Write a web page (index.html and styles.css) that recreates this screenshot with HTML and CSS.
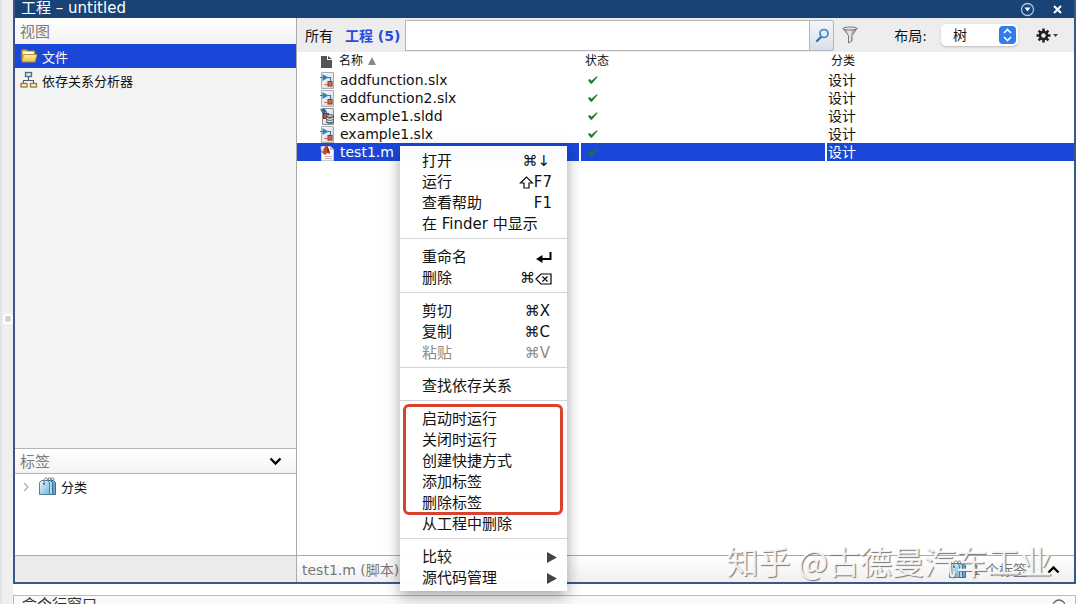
FILE: index.html
```html
<!DOCTYPE html>
<html lang="zh-CN">
<head>
<meta charset="utf-8">
<title>工程 – untitled</title>
<link rel="stylesheet" href="styles.css">
</head>
<body>
<svg class="defs" aria-hidden="true">
  <defs>
    <linearGradient id="paper" x1="0" y1="0" x2="1" y2="1"><stop offset="0" stop-color="#fff"/><stop offset="1" stop-color="#ccd3da"/></linearGradient>
    <linearGradient id="tagfill" x1="0" y1="0" x2="1" y2="1"><stop offset="0" stop-color="#e9f7fd"/><stop offset="1" stop-color="#78b4d9"/></linearGradient>
    <linearGradient id="gold" x1="0" y1="0" x2="0" y2="1"><stop offset="0" stop-color="#fff3a6"/><stop offset="1" stop-color="#e8bd45"/></linearGradient>
    <linearGradient id="steel" x1="0" y1="0" x2="1" y2="0"><stop offset="0" stop-color="#888"/><stop offset=".45" stop-color="#eee"/><stop offset="1" stop-color="#777"/></linearGradient>
    <symbol id="slx" viewBox="0 0 15 17">
      <path d="M1.500.5h12v16h-12z" fill="url(#paper)" stroke="#a9aeb3"/>
      <path d="M2.500 2l6 3.500-6 3.500z" fill="#2f7fb8"/><path d="M0 5.500h3M8 5.500h2.500v4" fill="none" stroke="#2f7fb8" stroke-width="1.200"/>
      <rect x="8" y="9.500" width="4" height="4.500" fill="#d8684c" stroke="#943624"/>
      <path d="M4.500 12.500h3.500" stroke="#c06a58"/>
    </symbol>
    <symbol id="sldd" viewBox="0 0 15 17">
      <path d="M2.500.5h11v16h-11z" fill="url(#paper)" stroke="#8a9096"/>
      <path d="M0 1l4.500-.5L7 3.500 3 6z" fill="#286d9e"/><path d="M5 3l2 2" stroke="#286d9e"/>
      <rect x="3.500" y="5.500" width="5" height="5" fill="#c9563f" stroke="#7d2c20"/>
      <path d="M6.500 8v6c0 1.600 7 1.600 7 0V8z" fill="#707880" stroke="#41484f"/>
      <ellipse cx="10" cy="8" rx="3.500" ry="1.300" fill="#dfe4e8" stroke="#41484f"/>
      <path d="M6.500 10.500q3.500 1.800 7 0M6.500 12.800q3.500 1.800 7 0" fill="none" stroke="#f3f3f3"/>
    </symbol>
    <symbol id="mfile" viewBox="0 0 15 17">
      <path d="M1.500 2.500h9l3 3v11h-12z" fill="#f8f8f8" stroke="#c8cdd2"/>
      <path d="M1 7.500l2-2 3.500-5L9 5l1 5-3-1-2 2z" fill="#c7442f"/><path d="M0 3l4 3-2 2z" fill="#b9d3ec"/><path d="M6.500.5L10 9l-2.500-1z" fill="#732b26"/>
      <path d="M5 12.500h7M5 14.500h7" stroke="#d8b4aa"/><path d="M10.500 2.500v3h3" fill="#ddd" stroke="#b7bdc3"/>
    </symbol>
    <symbol id="tags" viewBox="0 0 18 19">
      <path d="M8.500 3.500h6l2 2v12h-8z" fill="#6aa6cc" stroke="#3c6f94"/>
      <path d="M6.500 3.500h5l2 2v12h-8z" fill="#a9d7ed" stroke="#3c6f94"/>
      <path d="M.5 5.500l2-2h6l2 2v12H.5z" fill="url(#tagfill)" stroke="#4d82a8"/>
      <path d="M5 7c-1-8 4-7 4-3M9 3c0-3 3-3 3 0M12 3c0-3 3-3 3 0" fill="none" stroke="#6c7072"/>
      <circle cx="5" cy="7" r="1" fill="#356a8b"/>
    </symbol>
    <symbol id="check" viewBox="0 0 12 12"><path d="M1 6l1.700-1 1.800 1.800L9.500 2.500l1.300.2L4.800 9.800H3.600z" fill="#24762a"/></symbol>
  </defs>
</svg>

<main class="window">
  <header class="titlebar">
    <h1 class="title">工程 – untitled</h1>
    <button class="title-btn" aria-label="窗口操作"><svg width="15" height="15" viewBox="0 0 15 15"><circle cx="7.500" cy="7.500" r="6" fill="none" stroke="#a9c5e4" stroke-width="1.300"/><path d="M4.500 5.500h6L7.500 9.500z" fill="#fff"/></svg></button>
    <button class="title-btn" aria-label="关闭"><svg width="11" height="11" viewBox="0 0 11 11"><path d="M2 2l7 7M9 2L2 9" stroke="#fff" stroke-width="2"/></svg></button>
  </header>
  <div class="panes">
    <aside class="sidebar">
      <h2 class="section-head">视图</h2>
      <nav class="views">
        <button class="view view-on"><svg width="18" height="16" viewBox="0 0 18 16"><path d="M1.500 13V2.500l1-1h4l1.500 1.500h7v9" fill="#d4a536" stroke="#8f7434"/><path d="M3 3.500h11v5H3z" fill="#fffbe0"/><path d="M3.500 6.500h13.500l-2 7.500h-13z" fill="url(#gold)" stroke="#b4903c"/></svg>文件</button>
        <button class="view"><svg width="18" height="18" viewBox="0 0 18 18"><path d="M8.500 6v3.500M3.500 12V9.500h10V12" fill="none" stroke="#555b66" stroke-width="1.200"/><rect x="5.500" y="1.500" width="6" height="4" fill="#d8e8f5" stroke="#50657f" stroke-width="1.300"/><rect x="1" y="12.500" width="6" height="3.500" fill="#fff2c9" stroke="#9a7736" stroke-width="1.300"/><rect x="10.500" y="12.500" width="6" height="3.500" fill="#fff2c9" stroke="#9a7736" stroke-width="1.300"/></svg>依存关系分析器</button>
      </nav>
      <div class="section-head section-tags"><h2 class="section-name">标签</h2><button class="plain" aria-label="折叠"><svg width="13" height="9" viewBox="0 0 13 9"><path d="M1.500 1.500l5 5 5-5" fill="none" stroke="#000" stroke-width="2.300"/></svg></button></div>
      <div class="tag-tree"><button class="tag-item"><svg width="6" height="10" viewBox="0 0 6 10"><path d="M1 1l4 4-4 4" fill="none" stroke="#aaa" stroke-width="1.200"/></svg><svg width="18" height="19"><use href="#tags"/></svg>分类</button></div>
      <div class="side-foot"></div>
    </aside>
    <section class="content">
      <div class="toolbar">
        <button class="plain scope">所有</button>
        <button class="plain scope scope-on">工程 (5)</button>
        <div class="search">
          <input class="search-box" type="text" aria-label="搜索">
          <button class="search-btn" aria-label="搜索"><svg width="15" height="15" viewBox="0 0 15 15"><path d="M2 13l4-4" stroke="#3d70a8" stroke-width="2.400" stroke-linecap="round"/><circle cx="9" cy="5.500" r="4" fill="#dceefd" stroke="#4783bd" stroke-width="1.700"/></svg></button>
        </div>
        <button class="plain filter" aria-label="筛选"><svg width="16" height="18" viewBox="0 0 16 18"><path d="M1 2.500l5.500 7V17l3.500-2V9.500l5-7z" fill="url(#steel)" stroke="#777"/><ellipse cx="8" cy="2.500" rx="7" ry="1.500" fill="#e5e5e5" stroke="#777"/></svg></button>
        <label class="layout-label" for="layout">布局:</label>
        <div class="select-wrap">
          <select class="layout-select" id="layout"><option>树</option></select>
          <svg class="select-knob" width="17" height="18" viewBox="0 0 17 18"><rect width="17" height="18" rx="4" fill="#2f7cf6"/><path d="M5 7l3.500-3.500L12 7M5 11l3.500 3.500L12 11" fill="none" stroke="#fff" stroke-width="1.600"/></svg>
        </div>
        <button class="plain" aria-label="设置"><svg width="23" height="15" viewBox="0 0 23 15"><g stroke="#222" stroke-width="2.600"><path d="M7.500.5v14M.5 7.500h14M2.600 2.600l9.800 9.800M12.400 2.600l-9.800 9.800"/></g><circle cx="7.500" cy="7.500" r="4.800" fill="#222"/><circle cx="7.500" cy="7.500" r="2.200" fill="#eee"/><path d="M17 6h5l-2.500 3z" fill="#444"/></svg></button>
      </div>
      <table class="files">
        <thead><tr>
          <th class="col-name"><span class="cell"><svg width="15" height="13" viewBox="0 0 15 13"><path d="M2 1h6v4h5v8H2z" fill="#555"/><path d="M9 1l4 3H9z" fill="#555"/></svg>名称 <svg class="sort" width="8" height="8" viewBox="0 0 8 8"><path d="M4 0l4 8H0z" fill="#888"/></svg></span></th>
          <th class="col-state">状态</th><th class="col-cat">分类</th>
        </tr></thead>
        <tbody>
          <tr><td><span class="cell"><svg width="15" height="17"><use href="#slx"/></svg>addfunction.slx</span></td><td class="state"><svg width="12" height="12"><use href="#check"/></svg></td><td>设计</td></tr>
          <tr><td><span class="cell"><svg width="15" height="17"><use href="#slx"/></svg>addfunction2.slx</span></td><td class="state"><svg width="12" height="12"><use href="#check"/></svg></td><td>设计</td></tr>
          <tr><td><span class="cell"><svg width="15" height="17"><use href="#sldd"/></svg>example1.sldd</span></td><td class="state"><svg width="12" height="12"><use href="#check"/></svg></td><td>设计</td></tr>
          <tr><td><span class="cell"><svg width="15" height="17"><use href="#slx"/></svg>example1.slx</span></td><td class="state"><svg width="12" height="12"><use href="#check"/></svg></td><td>设计</td></tr>
          <tr class="row-on"><td><span class="cell"><svg width="15" height="17"><use href="#mfile"/></svg>test1.m</span></td><td class="state"><svg width="12" height="12"><use href="#check"/></svg></td><td>设计</td></tr>
        </tbody>
      </table>
      <footer class="status">
        <span class="status-file">test1.m (脚本)</span>
        <span class="status-tags"><svg width="18" height="19"><use href="#tags"/></svg>1 个标签</span>
        <button class="plain" aria-label="展开"><svg width="13" height="9" viewBox="0 0 13 9"><path d="M1.500 7.500l5-5 5 5" fill="none" stroke="#000" stroke-width="2.300"/></svg></button>
      </footer>
    </section>
  </div>
</main>

<section class="console"><h2 class="console-title">命令行窗口</h2><svg class="console-btn" width="14" height="14" viewBox="0 0 14 14"><circle cx="7" cy="7" r="6" fill="none" stroke="#666" stroke-width="1.300"/></svg></section>
<span class="splitter"></span>

<div class="menu" role="menu">
  <button class="item" role="menuitem">打开<kbd class="key key-in">⌘↓</kbd></button>
  <button class="item" role="menuitem">运行<kbd class="key"><svg width="15" height="13" viewBox="0 0 15 13"><path d="M7.500 1L1.500 7H5v5h5V7h3.500z" fill="none" stroke="#111" stroke-width="1.200"/></svg>F7</kbd></button>
  <button class="item" role="menuitem">查看帮助<kbd class="key">F1</kbd></button>
  <button class="item" role="menuitem">在 Finder 中显示</button>
  <hr class="sep">
  <button class="item" role="menuitem">重命名<svg width="16" height="12" viewBox="0 0 16 12"><path d="M14.500 0v7H5" fill="none" stroke="#000" stroke-width="2"/><path d="M0 7l6.500-4v8z"/></svg></button>
  <button class="item" role="menuitem">删除<span class="key">⌘<svg width="17" height="12" viewBox="0 0 17 12"><path d="M1 6l5-5h10v10H6zM7.500 3.500l5 5M12.500 3.500l-5 5" fill="none" stroke="#000" stroke-width="1.200"/></svg></span></button>
  <hr class="sep">
  <button class="item" role="menuitem">剪切<kbd class="key key-in">⌘X</kbd></button>
  <button class="item" role="menuitem">复制<kbd class="key key-in">⌘C</kbd></button>
  <button class="item item-off" role="menuitem" disabled>粘贴<kbd class="key key-in">⌘V</kbd></button>
  <hr class="sep">
  <button class="item" role="menuitem">查找依存关系</button>
  <hr class="sep">
  <div class="marked">
    <button class="item" role="menuitem">启动时运行</button>
    <button class="item" role="menuitem">关闭时运行</button>
    <button class="item" role="menuitem">创建快捷方式</button>
    <button class="item" role="menuitem">添加标签</button>
    <button class="item" role="menuitem">删除标签</button>
  </div>
  <button class="item" role="menuitem">从工程中删除</button>
  <hr class="sep">
  <button class="item item-sub" role="menuitem">比较<svg width="10" height="11" viewBox="0 0 10 11"><path d="M0 0l10 5.500L0 11z" fill="#444"/></svg></button>
  <button class="item item-sub" role="menuitem">源代码管理<svg width="10" height="11" viewBox="0 0 10 11"><path d="M0 0l10 5.500L0 11z" fill="#444"/></svg></button>
</div>

<div class="watermark">知乎 @古德曼汽车工业</div>
</body>
</html>
```

FILE: styles.css
```css
* { box-sizing: border-box; }
body {
  margin: 0;
  height: 100vh;
  padding: 0 4px 0 13px;
  display: flex;
  flex-direction: column;
  gap: 11px;
  overflow: hidden;
  position: relative;
  background: linear-gradient(90deg, #dfe5ea 2px, #efefef 2px, #efefef 13px, #fff 13px);
  font-family: "DejaVu Sans", "Noto Sans CJK SC", sans-serif;
  font-size: 14px;
  color: #111;
}
svg { flex: none; display: block; }
button, input, select { font: inherit; color: inherit; margin: 0; }
h1, h2 { margin: 0; font-weight: 400; }
.defs { position: absolute; width: 0; height: 0; }
.plain, .title-btn { border: 0; padding: 0; background: none; }

.window {
  flex: 1;
  min-height: 0;
  display: flex;
  flex-direction: column;
  border: 2px solid #355a87;
  border-top: 0;
}
.titlebar {
  height: 18px;
  flex: none;
  display: flex;
  align-items: center;
  gap: 17px;
  padding: 0 11px 0 6px;
  background: #194275;
  color: #fff;
}
.title { flex: 1; font-size: 15px; line-height: 16px; padding-bottom: 2px; }
.panes { flex: 1; min-height: 0; display: flex; }

.sidebar {
  flex: 0 0 282px;
  display: flex;
  flex-direction: column;
  border-right: 1px solid #aaa;
  background: #f3f3f3;
}
.section-head {
  height: 26px;
  flex: none;
  padding: 1px 5px 0;
  font-size: 15px;
  line-height: 26px;
  color: #7b7b7b;
  background: linear-gradient(#fff, #f3f3f3);
}
.section-tags {
  display: flex;
  align-items: center;
  justify-content: space-between;
  padding-right: 14px;
  border-top: 1px solid #b5b5b5;
  border-bottom: 1px solid #b5b5b5;
}
.section-name { font-size: 15px; line-height: 24px; }
.views { flex: 1; }
.view {
  width: 100%;
  height: 24px;
  display: flex;
  align-items: center;
  gap: 4px;
  padding: 0 5px;
  border: 0;
  background: none;
  font-size: 13px;
}
.view-on { background: #1a47d8; color: #fff; }
.tag-tree { height: 81px; background: #fff; padding-top: 3px; }
.tag-item {
  display: flex;
  align-items: center;
  gap: 4px;
  padding: 0 8px;
  border: 0;
  background: none;
  font-size: 13px;
}
.tag-item svg:first-child { margin-right: 6px; }
.side-foot { height: 27px; border-top: 1px solid #aaa; background: #ececec; }

.content { flex: 1; min-width: 0; display: flex; flex-direction: column; background: #fff; }
.toolbar {
  height: 34px;
  flex: none;
  display: flex;
  align-items: center;
  padding: 0 15px 0 8px;
  background: #ededed;
}
.scope { margin-right: 12px; }
.scope-on { margin-right: 5px; color: #2b4bdc; font-weight: 700; }
.search { flex: 1; height: 31px; display: flex; }
.search-box {
  flex: 1;
  min-width: 0;
  border: 1px solid #b5b5b5;
  background: #fff;
  outline: 0;
}
.search-btn {
  width: 24px;
  padding: 0 0 0 5px;
  border: 1px solid #b0b5c0;
  border-left: 0;
  border-radius: 0 3px 3px 0;
  background: linear-gradient(#f4f6fa, #d9dfeb);
}
.filter { margin: 0 36px 0 8px; }
.layout-label { margin-right: 14px; }
.select-wrap { position: relative; width: 77px; margin-right: 18px; }
.layout-select {
  width: 100%;
  height: 22px;
  padding: 0 12px;
  appearance: none;
  border: 0;
  border-radius: 5px;
  background: #fff;
  box-shadow: 0 1px 2px #bbb;
}
.select-knob { position: absolute; right: 2px; top: 2px; pointer-events: none; }

.files { width: 100%; border-collapse: collapse; table-layout: fixed; line-height: 18px; }
.files th {
  height: 18px;
  padding: 0 5px;
  font-size: 12px;
  line-height: 18px;
  font-weight: 400;
  text-align: left;
}
.files td { height: 18px; padding: 0 1px; }
.files th + th { padding-left: 4px; }
.files th + th, .files td + td { border-left: 2px solid #fff; }
.files .col-name { width: 283px; }
.files .col-state { width: 246px; }
.files .cell { display: flex; align-items: center; gap: 5px; height: 18px; padding-left: 22px; }
.files th .cell { padding-left: 17px; }
.files .state { padding-left: 6px; }
.files tbody::before { content: ""; display: table-row; height: 1px; }
.row-on { background: #1a47d8; color: #fff; }

.status {
  height: 27px;
  margin-top: auto;
  display: flex;
  align-items: center;
  padding: 0 14px 0 5px;
  border-top: 1px solid #aaa;
  background: linear-gradient(#fff, #f0f0f0);
  color: #777;
}
.status-file { flex: 1; }
.status-tags { display: flex; align-items: center; gap: 5px; margin-right: 20px; }

.console {
  height: 9px;
  flex: none;
  display: flex;
  justify-content: space-between;
  overflow: hidden;
  padding: 0 9px 0 8px;
  border: 1px solid #bbb;
  border-bottom: 0;
  background: #fafafa;
}
.console-title { font-size: 15px; line-height: 18px; color: #333; }
.console-btn { margin-top: 3px; }
.splitter {
  position: absolute;
  left: 3px;
  top: 314px;
  width: 10px;
  height: 10px;
  border: 2px solid #fff;
  border-radius: 4px;
  background: #d2d2d2;
}

.menu {
  position: absolute;
  left: 400px;
  top: 146px;
  width: 167px;
  padding: 5px 0 2px;
  background: rgba(255, 255, 255, .98);
  box-shadow: 0 5px 14px rgba(0, 0, 0, .36);
}
.item {
  width: 100%;
  height: 21px;
  display: flex;
  align-items: center;
  justify-content: space-between;
  padding: 0 15px 0 22px;
  border: 0;
  background: none;
  font-size: 15px;
  line-height: 21px;
  white-space: nowrap;
}
.item-off { color: #8c8c8c; }
.item-sub { padding-right: 10px; }
.key { display: flex; align-items: center; font-family: inherit; font-size: 15px; }
.key-in { padding-right: 2px; }
.sep { height: 12px; margin: 0; border: 0; background: linear-gradient(#d4d4d4, #d4d4d4) 0 3px / 100% 1px no-repeat; }
.marked { position: relative; }
.marked::after {
  content: "";
  position: absolute;
  inset: -5px 4px -1px 3px;
  border: 3px solid #d8432f;
  border-radius: 6px;
  pointer-events: none;
}

.watermark {
  position: absolute;
  right: 28px;
  bottom: 22px;
  font-family: "Noto Sans CJK SC", sans-serif;
  font-size: 32px;
  line-height: 44px;
  font-weight: 400;
  color: rgba(255, 255, 255, .9);
  text-shadow: 1px 1px 1px #777;
  white-space: nowrap;
  pointer-events: none;
}
```
